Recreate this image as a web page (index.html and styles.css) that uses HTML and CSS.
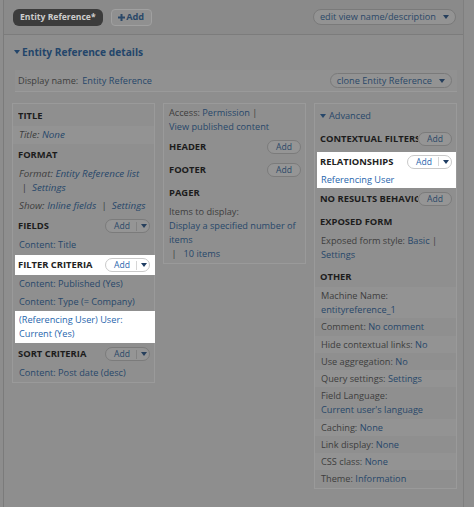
FILE: index.html
```html
<!DOCTYPE html>
<html>
<head>
<meta charset="utf-8">
<title>Entity Reference</title>
<link rel="stylesheet" href="styles.css">
</head>
<body>
<div class="page">
  <div class="topbar">
    <span class="tab">Entity Reference*</span>
    <span class="plusadd"><svg class="plus" width="7" height="7" viewBox="0 0 7 7"><path d="M2.5 0h2v2.5H7v2H4.5V7h-2V4.5H0v-2h2.5z" fill="currentColor"/></svg>Add</span>
    <span class="grow"></span>
    <span class="pill">edit view name/description<svg class="caret" width="6" height="4" viewBox="0 0 6 4"><path d="M0 0h6L3 4z" fill="currentColor"/></svg></span>
  </div>

  <div class="details">
    <div class="details-title"><svg class="caret tcaret" width="6" height="4" viewBox="0 0 6 4"><path d="M0 0h6L3 4z" fill="currentColor"/></svg>Entity Reference details</div>
    <div class="display-row">
      <span class="label">Display name:</span><span class="link dn">Entity Reference</span>
      <span class="grow"></span>
      <span class="pill pill-sm">clone Entity Reference<svg class="caret" width="6" height="4" viewBox="0 0 6 4"><path d="M0 0h6L3 4z" fill="currentColor"/></svg></span>
    </div>

    <div class="columns">
      <div class="col col-left">
        <div class="sec">
          <div class="head"><span class="t">TITLE</span></div>
          <div class="row it odd"><span class="label">Title:</span> <span class="link">None</span></div>
        </div>
        <div class="sec">
          <div class="head"><span class="t">FORMAT</span></div>
          <div class="row it"><span class="label">Format:</span> <span class="link">Entity Reference list</span><br>&nbsp;<span class="label">|</span>&nbsp; <span class="link">Settings</span></div>
          <div class="row it"><span class="label">Show:</span> <span class="link">Inline fields</span> <span class="label">&nbsp;|&nbsp;</span> <span class="link">Settings</span></div>
        </div>
        <div class="sec">
          <div class="head"><span class="t">FIELDS</span><span class="add drop"><span>Add</span><span class="sep"></span><svg class="caret" width="6" height="4" viewBox="0 0 6 4"><path d="M0 0h6L3 4z" fill="currentColor"/></svg></span></div>
          <div class="row"><span class="link">Content: Title</span></div>
        </div>
        <div class="sec">
          <div class="head hl hl-left"><span class="t">FILTER CRITERIA</span><span class="add drop"><span>Add</span><span class="sep"></span><svg class="caret" width="6" height="4" viewBox="0 0 6 4"><path d="M0 0h6L3 4z" fill="currentColor"/></svg></span></div>
          <div class="row"><span class="link">Content: Published (Yes)</span></div>
          <div class="row"><span class="link">Content: Type (= Company)</span></div>
          <div class="row hl hl-left"><span class="link">(Referencing User) User:<br>Current (Yes)</span></div>
        </div>
        <div class="sec">
          <div class="head"><span class="t">SORT CRITERIA</span><span class="add drop"><span>Add</span><span class="sep"></span><svg class="caret" width="6" height="4" viewBox="0 0 6 4"><path d="M0 0h6L3 4z" fill="currentColor"/></svg></span></div>
          <div class="row"><span class="link">Content: Post date (desc)</span></div>
        </div>
      </div>

      <div class="col col-mid">
        <div class="sec">
          <div class="row mrow"><span class="label">Access:</span> <span class="link">Permission</span> <span class="label">|</span><br><span class="link">View published content</span></div>
        </div>
        <div class="sec empty">
          <div class="head"><span class="t">HEADER</span><span class="add">Add</span></div>
        </div>
        <div class="sec empty">
          <div class="head"><span class="t">FOOTER</span><span class="add">Add</span></div>
        </div>
        <div class="sec">
          <div class="head"><span class="t">PAGER</span></div>
          <div class="row mrow"><span class="label">Items to display:</span><br><span class="link">Display a specified number of<br>items</span><br>&nbsp;<span class="label">|</span>&nbsp;&nbsp; <span class="link">10 items</span></div>
        </div>
      </div>

      <div class="col col-right">
        <div class="adv"><svg class="caret acaret" width="6" height="4" viewBox="0 0 6 4"><path d="M0 0h6L3 4z" fill="currentColor"/></svg>Advanced</div>
        <div class="sec empty">
          <div class="head"><span class="t">CONTEXTUAL FILTERS</span><span class="add">Add</span></div>
        </div>
        <div class="sec hlsec">
          <div class="head rhead"><span class="t">RELATIONSHIPS</span><span class="add drop"><span>Add</span><span class="sep"></span><svg class="caret" width="6" height="4" viewBox="0 0 6 4"><path d="M0 0h6L3 4z" fill="currentColor"/></svg></span></div>
          <div class="row rrow"><span class="link">Referencing User</span></div>
        </div>
        <div class="sec empty">
          <div class="head"><span class="t">NO RESULTS BEHAVIOR</span><span class="add">Add</span></div>
        </div>
        <div class="sec exposed">
          <div class="head"><span class="t">EXPOSED FORM</span></div>
          <div class="row orow"><span class="label">Exposed form style:</span> <span class="link">Basic</span> <span class="label">|</span><br><span class="link">Settings</span></div>
        </div>
        <div class="sec">
          <div class="head"><span class="t">OTHER</span></div>
          <div class="row orow odd"><span class="label">Machine Name:</span><br><span class="link">entityreference_1</span></div>
          <div class="row orow"><span class="label">Comment:</span> <span class="link">No comment</span></div>
          <div class="row orow odd"><span class="label">Hide contextual links:</span> <span class="link">No</span></div>
          <div class="row orow"><span class="label">Use aggregation:</span> <span class="link">No</span></div>
          <div class="row orow odd"><span class="label">Query settings:</span> <span class="link">Settings</span></div>
          <div class="row orow"><span class="label">Field Language:</span><br><span class="link">Current user's language</span></div>
          <div class="row orow odd"><span class="label">Caching:</span> <span class="link">None</span></div>
          <div class="row orow"><span class="label">Link display:</span> <span class="link">None</span></div>
          <div class="row orow odd"><span class="label">CSS class:</span> <span class="link">None</span></div>
          <div class="row orow"><span class="label">Theme:</span> <span class="link">Information</span></div>
        </div>
      </div>
    </div>
  </div>
</div>
</body>
</html>
```

FILE: styles.css
```css
* { box-sizing: border-box; }
html, body { margin: 0; padding: 0; }
body {
  width: 474px;
  height: 507px;
  overflow: hidden;
  background: #8d8d8d;
  font-family: "Open Sans", "DejaVu Sans", sans-serif;
  font-size: 9.2px;
  line-height: 14px;
  color: #3d3d3d;
}
.page {
  margin-left: 3px;
  width: 461px;
  height: 507px;
  border-left: 1px solid #7b7b7b;
  border-right: 1px solid #7f7f7f;
  background: #8e8e8e;
}
.grow { flex: 1; }
.topbar {
  height: 35px;
  display: flex;
  align-items: center;
  padding: 0 7px 0 9px;
  background: #8a8a8a;
  border-bottom: 1px solid #7c7c7c;
}
.tab {
  height: 17px;
  line-height: 17px;
  padding: 0 7px;
  border-radius: 6px;
  background: #3c3c3c;
  color: #cdcdcd;
  font-weight: 700;
  font-size: 8.6px;
}
.plusadd {
  margin-left: 8px;
  height: 17px;
  width: 41px;
  display: flex;
  align-items: center;
  justify-content: center;
  border: 1px solid #a0a0a0;
  border-radius: 4px;
  background: #909090;
  color: #2a4868;
  font-weight: 700;
  font-size: 9.2px;
}
.plus { margin-right: 1px; }
.pill {
  height: 16px;
  display: flex;
  align-items: center;
  padding: 0 6px 0 6px;
  border: 1px solid #7a7a7a;
  border-radius: 8px;
  background: #939393;
  color: #2a4868;
}
.pill .caret { margin-left: 7px; color: #263f5c; }
.pill-sm { height: 15px; }
.details { padding: 0 6px 0 8px; }
.details-title {
  margin-top: 10px;
  height: 14px;
  padding-left: 2px;
  display: flex;
  align-items: center;
  font-weight: 700;
  font-size: 10.2px;
  color: #23456a;
}
.tcaret { margin-right: 2px; }
.display-row {
  margin: 11px 0 0 3px;
  height: 22px;
  display: flex;
  align-items: center;
  padding: 0 5px 0 3px;
  background: #919191;
  border-bottom: 1px solid #9a9a9a;
}
.dn { margin-left: 4px; }
.link { color: #27476a; }
.label { color: #3d3d3d; }
.it { font-style: italic; font-size: 9.8px; }
.columns {
  margin-top: 11px;
  display: grid;
  grid-template-columns: repeat(3, minmax(0, 1fr));
  column-gap: 8px;
  align-items: start;
}
.col {
  border: 1px solid #9a9a9a;
  background: #8f8f8f;
  min-width: 0;
}
.col-left { padding-top: 2px; }
.sec { margin-bottom: 1px; }
.sec:last-child { margin-bottom: 0; }
.sec.empty { margin-bottom: 3px; }
.sec.exposed { margin-bottom: 3.75px; }
.head {
  height: 20px;
  display: flex;
  align-items: center;
  padding: 0 4px 0 5px;
  font-weight: 700;
  font-size: 9.4px;
  color: #1c1c1c;
}
.head .t {
  flex: 1;
  min-width: 0;
  overflow: hidden;
  white-space: nowrap;
}
.add {
  flex: none;
  width: 34px;
  height: 14px;
  display: flex;
  align-items: center;
  justify-content: center;
  border: 1px solid #7b7b7b;
  border-radius: 7px;
  background: #959595;
  color: #2a4868;
  font-weight: 400;
  font-size: 8.6px;
}
.add.drop { width: 45px; justify-content: flex-start; padding-left: 8px; }
.sep { width: 1px; height: 9px; background: #828282; margin: 0 4px 0 6px; }
.add .caret { color: #263f5c; }
.row { padding: 2px 5px 2px 6px; white-space: nowrap; }
.row.odd { background: #939393; }
.mrow { padding: 2px 5px; }
.orow { padding: 2px 5px 1.25px 6px; }
.adv {
  padding: 5px 5px 0;
  height: 19px;
  margin-bottom: 6px;
  display: flex;
  align-items: center;
  color: #27476a;
}
.acaret { margin-right: 3px; }
.hl { background: #ffffff; }
.hl .link { color: #1f66ad; }
.hl .t { color: #222222; }
.hl .add, .hlsec .add { background: #ffffff; border-color: #c9c9c9; color: #1f66ad; }
.hl .sep, .hlsec .sep { background: #d6d6d6; }
.hl .caret, .hlsec .caret { color: #1e3d63; }
.hl-left { margin-left: 2px; margin-right: -1px; }
.head.hl-left { padding-left: 3px; padding-right: 5px; }
.row.hl-left { padding-left: 4px; }
.hlsec { background: #ffffff; margin-left: 2px; }
.hlsec .link { color: #1f66ad; }
.hlsec .t { color: #222222; }
.rhead { height: 19px; padding-left: 3px; }
.rrow { padding: 2px 5px 1px 4px; }
```
